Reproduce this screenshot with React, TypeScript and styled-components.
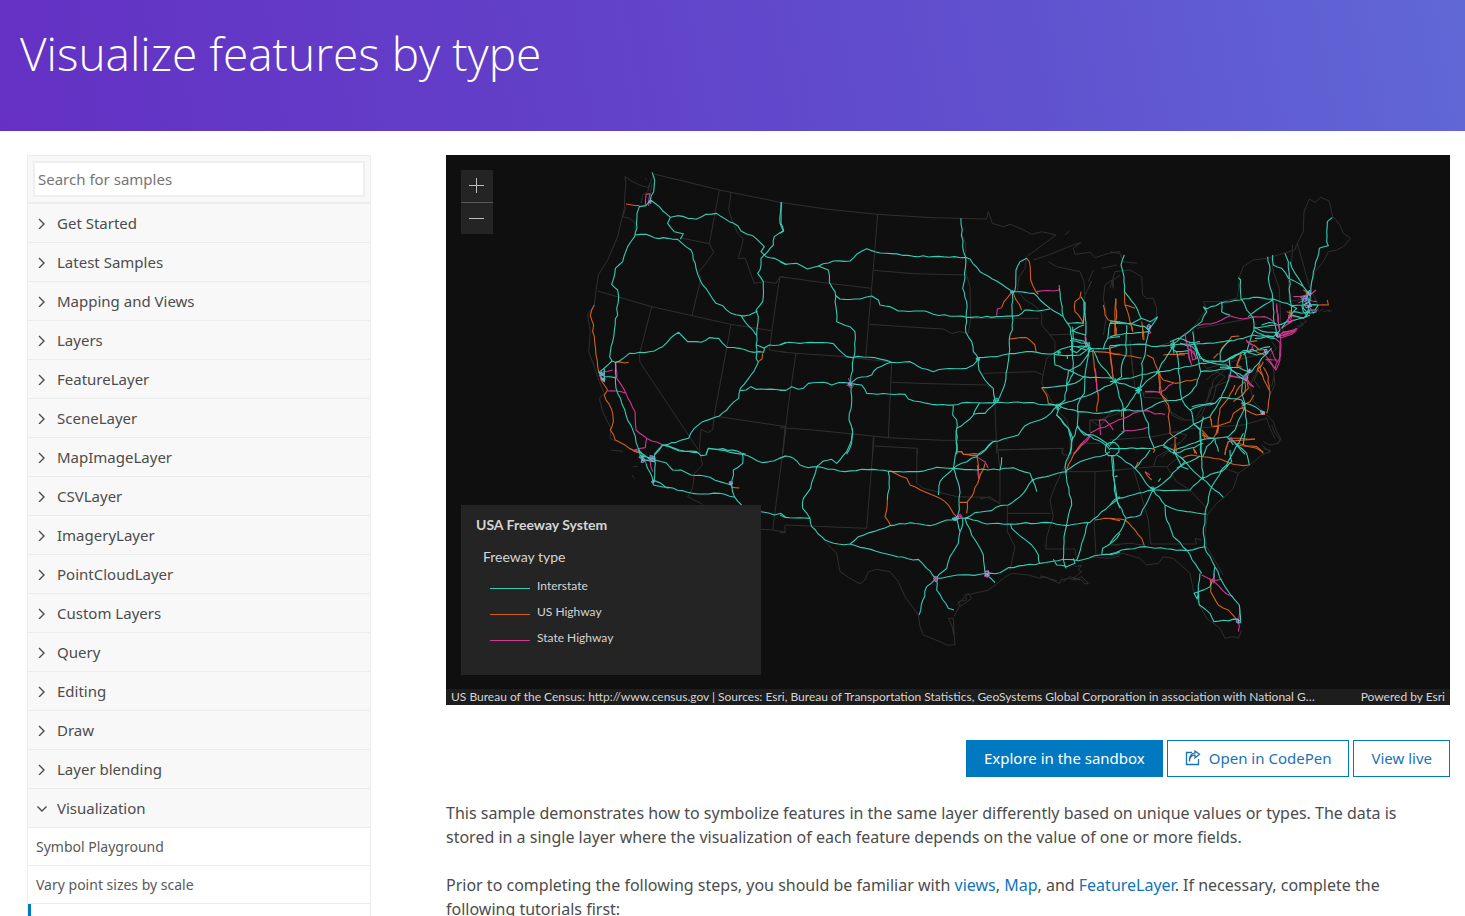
import React from "react";
import styled, { createGlobalStyle, css } from "styled-components";

const sans = `"Noto Sans", "Open Sans", sans-serif`;
const displayFont = `"Open Sans", "Noto Sans", sans-serif`;
const mapFont = `Lato, "Open Sans", sans-serif`;

const GlobalStyle = createGlobalStyle`
  *, *::before, *::after { box-sizing: border-box; }
  body { margin: 0; background: #fff; color: #4c4c4c; font-family: ${sans}; }
  button, input { font: inherit; }
`;

const Page = styled.div`
  height: 100vh;
  overflow: hidden;
`;

const Banner = styled.header`
  height: 131px;
  padding: 20px;
  color: #fff;
  background: linear-gradient(80deg, #6431c4 0%, #6240c8 38%, #6052cf 70%, #6068d6 100%);
`;

const Title = styled.h1`
  margin: 0;
  font-family: ${displayFont};
  font-size: 46px;
  line-height: 66px;
  font-weight: 300;
`;

const Columns = styled.div`
  display: grid;
  grid-template-columns: 344px minmax(0, 1fr);
  column-gap: 75px;
  padding: 24px 15px 0 27px;
  align-items: start;
`;

const Sidebar = styled.nav`
  border: 1px solid #ececec;
  background: #f8f8f8;
`;

const SearchBox = styled.div`
  padding: 5px;
  border-bottom: 2px solid #ececec;
`;

const SearchInput = styled.input`
  display: block;
  width: 100%;
  height: 36px;
  padding: 0 3px;
  border: 2px solid #efefef;
  background: #fff;
  color: #4c4c4c;
  font-size: 15px;
  &::placeholder { color: #757575; opacity: 1; }
`;

const List = styled.ul`
  list-style: none;
  margin: 0;
  padding: 0;
`;

const Category = styled.button`
  display: flex;
  align-items: center;
  gap: 10px;
  width: 100%;
  height: 39px;
  padding: 0 9px;
  border: 0;
  border-bottom: 1px solid #ececec;
  background: transparent;
  color: #4c4c4c;
  font-size: 15px;
  text-align: left;
`;

const Sample = styled.a<{ $active?: boolean }>`
  display: flex;
  align-items: center;
  height: 38px;
  padding: 0 8px;
  border-bottom: 1px solid #ececec;
  background: #fff;
  color: #595959;
  font-size: 14px;
  text-decoration: none;
  ${(p) => p.$active && css`
    border-left: 3px solid #0079c1;
    padding-left: 5px;
  `}
`;

const MapView = styled.section`
  position: relative;
  background: #0f0f0f;
  color: #d4d4d4;
  font-family: ${mapFont};
  overflow: hidden;
`;

const MapDrawing = styled.svg`
  display: block;
  width: 100%;
  height: auto;
  fill: none;
  stroke-linejoin: round;
  path { vector-effect: non-scaling-stroke; }
`;

const ZoomControl = styled.div`
  position: absolute;
  top: 15px;
  left: 15px;
  display: grid;
  width: 32px;
  row-gap: 1px;
  background: #5a5a5a;
`;

const ZoomButton = styled.button`
  display: grid;
  place-items: center;
  height: 32px;
  padding: 0;
  border: 0;
  background: #242424;
  color: #bdbdbd;
  & + & { height: 31px; }
`;

const Legend = styled.div`
  position: absolute;
  left: 15px;
  bottom: 30px;
  width: 300px;
  height: 170px;
  padding: 10px 15px;
  background: #242424;
`;

const LegendTitle = styled.h2`
  margin: 0;
  font-size: 14px;
  line-height: 20px;
  font-weight: 700;
`;

const LegendCaption = styled.h3`
  margin: 12px 0 5px 7px;
  font-size: 14px;
  line-height: 20px;
  font-weight: 400;
`;

const LegendRow = styled.li`
  display: flex;
  align-items: center;
  gap: 7px;
  height: 26px;
  margin-left: 14px;
  font-size: 12px;
`;

const Swatch = styled.span<{ $color: string }>`
  width: 40px;
  height: 1px;
  margin-top: 7px;
  background: ${(p) => p.$color};
`;

const Attribution = styled.div`
  position: absolute;
  left: 0;
  right: 0;
  bottom: 0;
  display: flex;
  justify-content: space-between;
  gap: 40px;
  height: 16px;
  padding: 0 5px;
  background: #1d1d1d;
  font-size: 12px;
  line-height: 16px;
  white-space: nowrap;
`;

const Sources = styled.span`
  min-width: 0;
  overflow: hidden;
  text-overflow: ellipsis;
`;

const Actions = styled.div`
  display: flex;
  justify-content: flex-end;
  gap: 4px;
  margin: 35px 0 24px;
`;

const Action = styled.button<{ $primary?: boolean }>`
  display: flex;
  align-items: center;
  gap: 8px;
  height: 37px;
  padding: 0 17px 2px;
  border: 1px solid #0079c1;
  background: ${(p) => (p.$primary ? "#0079c1" : "#fff")};
  color: ${(p) => (p.$primary ? "#fff" : "#1a73b5")};
  font-size: 15px;
  white-space: nowrap;
`;

const Paragraph = styled.p`
  margin: 0 0 24px;
  padding-right: 16px;
  font-size: 16px;
  line-height: 24px;
`;

const TextLink = styled.a`
  color: #0f74ba;
  text-decoration: none;
`;

const TEAL = "#35cdb5";
const ORANGE = "#d2601f";
const PINK = "#cf3790";
const BORDER = "#2f2f2f";
const HUB = "#8aa9d8";

type Sheet = {
  x: number;
  y: number;
  borders: string[];
  interstates: string[];
  usHighways: string[];
  stateHighways: string[];
};

// The country is stored as sheets drawn at three times the view scale.
const sheets: Sheet[] = [
  {
    x: 0,
    y: 0,
    borders: [
      "M622 57L720 80 820 105 920 125 1002 142",
      "M622 57L615 80 605 98 580 90 557 78 537 65 540 85 537 110 535 160 528 190 515 245 485 315 457 360 450 408 445 450 425 480 433 530 428 590 445 635 460 680 475 715 460 730 470 770 495 820 492 850 508 858",
      "M540 155L530 185 550 190 567 203 568 235",
      "M612 85L605 110 590 120 585 145M618 85L610 125 617 140M598 70L603 76",
      "M700 248L790 266M820 105L805 185 790 266 803 292 780 325 757 352 765 370 738 482",
      "M455 408L617 455 738 482 855 508 975 527",
      "M855 112L848 165 858 195 875 235 892 252 885 280 877 310 898 310 912 350 925 385 955 380 990 385 1002 365 1020 368",
      "M617 455L580 600 582 622 757 885",
      "M855 508L842 580 805 780 800 825 785 833 765 822 760 885M1002 365L990 440 970 585 1020 592M805 783L1020 815",
    ],
    interstates: [
      "M618 52L626 75 623 110 613 135 600 152 580 155 573 175 573 220 566 245 545 275 530 320 508 340 503 370 497 388 515 405 518 425 512 460 515 480 508 492 500 560 491 605 498 618 508 622 510 665 508 667 510 700 540 780 568 845 577 880 585 895",
      "M613 135L640 155 673 187 695 182 725 190 750 193 780 178 812 175 850 200 875 212 885 228 920 242 945 265 955 275 945 290 960 305 985 310 1020 328",
      "M673 187L665 205 685 230 712 236 703 253",
      "M566 240L600 238 625 248 665 250 695 253 735 285 750 340 770 390 810 445 830 452 855 475 885 482 910 480 935 468M885 482L910 515 930 540",
      "M1005 142L1003 175 1002 205 1012 228 985 245 982 270 965 290 955 300 945 310 942 345 935 355 952 380 950 440 930 465 937 485 932 540 932 600 930 610 937 622 915 660 883 700 878 730 850 755 820 783 770 800 745 820 728 850 690 862 650 870 625 898",
      "M508 622L520 618 550 595 580 592 625 588 650 575 675 548 698 532 725 560 765 562 790 548 818 550 843 577 880 580 925 592 953 592 955 580 932 570M953 580L970 570 1000 570 1020 562",
      "M883 707L900 705 915 695 930 703 1020 706",
      "M498 618L472 642 458 652 475 665 508 668M475 642L475 680 462 660",
      "M650 870L700 885 757 893M780 898L787 880 860 885 900 898",
    ],
    usHighways: [
      "M445 450L433 482 443 510 440 530 445 545 450 600 458 650 465 675 475 690 485 705 475 720 500 775 502 800 493 825 508 855 550 880 580 893",
      "M508 622L548 622M950 595L948 612 937 620M540 147L580 152",
    ],
    stateHighways: [
      "M598 150L600 118 612 116 608 152",
      "M510 622L512 670 540 715 567 770 570 825 602 850 598 878 565 885M602 850L650 870M485 708L512 708 540 715M470 650L500 645M460 660L475 680",
    ],
  },
  {
    x: 334,
    y: 0,
    borders: [
      "M0 142L145 163 293 178 455 188 620 192 625 170 637 205 670 215 690 208 725 222 755 238 785 230 828 240 740 305",
      "M293 178L275 400 265 508 257 612 200 605",
      "M281 346L400 356 557 360M0 365L145 385 275 400M268 508L450 520 490 522 515 535 540 530 560 535",
      "M545 235L557 265 557 350 570 395 572 490 565 535",
      "M572 490L778 490M0 590L48 595 200 605 335 622M335 622L325 848M48 595L25 750 8 898M0 818L100 825 325 848 400 852 490 856 650 856M280 845L278 895M282 873L412 880 412 898",
      "M335 682L450 686 620 690 640 705 645 740 650 895M610 655L765 650 790 660",
      "M740 305L735 340 718 365 712 405 735 435 762 450 785 475 785 510 810 540 825 560 825 590 800 610 790 655 785 685 810 730 835 770 860 795 870 830 870 890",
      "M810 540L910 536M855 240L868 228M760 315L805 300 880 270 902 263 880 280 885 298 930 292 945 308 985 295 1020 290",
      "M805 320L830 335 900 350 912 380 915 420 935 378 925 400M915 420L912 450 918 540M940 345L925 380M965 340L1010 330M1020 360L1000 375 1000 400 995 375 975 390 970 430 980 480 970 540",
      "M655 885L850 880 845 898M930 830L930 795 965 795 1015 760",
    ],
    interstates: [
      "M5 142L3 175 3 205 11 228 0 235M0 320L15 328 50 325 82 342 115 333 145 345 148 382 165 410 170 500 210 515 225 530 225 585 220 610 212 680 215 740 207 795 218 830 215 865 200 898",
      "M115 333L160 318 210 318 230 298 260 281 285 290 400 304 475 304 557 307 570 312 600 350 650 378 695 408 735 412 762 415 780 435 810 460 850 485 872 520 875 560 880 655 860 690",
      "M543 190L548 275 557 307 555 370 548 400 560 440 557 530 575 560 580 590 595 610 597 645 615 675 640 700 645 735",
      "M165 420L180 432 240 432 275 423 295 435 300 450 330 455 355 468 435 468 460 478 560 487 650 485 715 482 735 465 775 468 810 462",
      "M740 310L720 320 708 345 705 405 697 420 697 525 688 550 687 600 682 640 670 700 650 740",
      "M0 570L25 562 60 565 90 562 160 566 200 605 285 608 335 622 390 620 425 640 460 650 490 642 560 640 580 630 595 608 650 605 687 596 740 590 820 597 860 602 900 600 930 575",
      "M0 706L20 705 35 695 55 703 70 700 85 685 130 682 155 690 175 683 212 685 245 690 260 715 375 718 385 732 455 748 520 750 560 742 650 742 745 743 835 752 895 770 955 775 1020 765",
      "M212 685L230 670 275 660 290 640 335 622",
      "M520 750L518 780 530 795 530 898M530 820L545 812 580 780 600 742M580 778L615 775 645 745",
      "M835 750L800 785 735 812 715 840 640 860 600 898",
      "M838 400L843 440 850 485M860 505L910 505 912 440 903 425M915 440L918 560 930 580M875 530L890 520 912 510M875 550L910 558 925 570M820 597L845 582 875 573 920 575M823 600L825 630 865 645 910 665 930 668 1000 670M785 698L855 692 885 685 912 665M835 750L855 735 860 690 865 648 900 630 930 585M930 580L915 660 913 715 893 750 892 810 912 840 940 840 970 858 990 875M835 755L830 780 865 820 878 850 870 898M835 752L905 727 960 705 1005 680M930 580L970 582 983 550 1020 545M940 585L955 620 1000 675M970 582L1020 570M983 550L990 505 1020 500M893 810L885 840 875 855M862 600L862 612",
    ],
    usHighways: [
      "M740 310L748 320 752 375 768 410 775 418M695 412L672 440 665 458M700 415L725 465M688 552L740 548 765 570 768 590M838 390L838 405M903 410L900 428 885 440 885 470 910 503M970 450L975 480 985 495 1005 500M1007 430L1010 470 1005 540M785 698L800 720 805 745 835 755M938 585L945 650 955 720 950 770M945 590L1020 598M988 572L1000 670M530 890L545 890 550 898 600 898M880 895L905 870",
    ],
    stateHighways: [
      "M770 410L838 405M665 458L652 462 650 482M915 545L918 580M945 640L950 700 955 720M905 870L930 845M205 670L212 685 200 692",
    ],
  },
  {
    x: 664,
    y: 0,
    borders: [
      "M388 365L400 335 430 315 470 310 555 285 560 268 580 230 582 170 598 132 615 142 632 127 658 138 668 185 690 210 700 235 722 250 700 275 680 285 655 290 640 320 615 350 600 400",
      "M485 308L490 350 508 400 512 500 520 525M548 270L545 320 535 350 538 440M562 265L600 400M535 440L595 430",
      "M388 365L385 410 380 430 335 440 280 440 290 460 250 518 190 560 140 575 100 568",
      "M0 290L30 295 40 320 80 325M0 400L15 350 60 345 95 365 98 420 110 430 130 430 140 460 140 490 115 510",
      "M250 518L255 575M260 520L425 490 440 510M255 595L290 640 440 600M60 575L75 700",
      "M98 715L150 710 170 725 185 780 215 795 255 795 275 780 290 745 300 700 350 680M290 640L320 650 345 665 320 690 310 730 300 745M0 855L130 845 250 820 400 810 470 790",
      "M485 560L500 580 480 600 490 640 495 690 480 720M440 650L420 690 430 740 460 770M470 780L490 800 500 830 512 850 505 865 480 870 460 860M470 790L480 820 495 850M455 870L480 890M545 530L580 510 570 500M600 400L620 440 625 465 600 470M640 470L660 465M190 830L230 840 215 860 190 870",
    ],
    interstates: [
      "M667 187L652 200 650 260 655 272 628 280 622 310 615 335 605 380 600 430 595 460",
      "M473 305L480 345 475 370 488 430 490 460 492 500 500 545M488 300L490 330 515 340 535 370 580 395 598 415M525 295L535 320 538 370 540 420 545 465 545 480 515 520M540 320L555 355 580 395",
      "M385 368L392 375 393 430 410 465 430 490 432 525 410 590 400 600",
      "M280 455L290 462 330 445 390 435 430 427 490 432 545 452 580 450 600 440M490 432L440 465 415 485M280 455L290 470 275 500 250 518 215 545 185 570 140 575 105 568 50 570 0 572M335 440L335 470 360 480",
      "M185 570L250 568 340 560 400 550 430 540 490 545M430 520L500 510 540 500 600 480M430 525L470 545 495 550M545 480L580 490 600 465M575 450L580 470 590 480M600 450L625 450 615 465 595 465",
      "M43 300L33 330 42 365 43 410 75 450 93 490 120 500 143 485M143 485L120 520 108 565 105 600 95 625 97 670 88 705M0 498L20 500 60 508 95 490M0 545L50 535 115 530M50 510L48 600 35 630 35 665 15 680",
      "M0 680L15 678 88 705 97 765 115 805 120 850 133 880M15 678L145 650 210 640 270 625 345 618 375 600 410 590 450 582 480 575M15 678L40 760 42 830 20 850 0 870",
      "M145 650L155 625 180 590 190 570M145 650L100 690 85 705 60 740 42 765 0 768M42 765L100 768 150 742 215 732 225 750 245 770 250 805 270 825 273 898M210 735L245 710 260 690 272 650 260 600 248 530M200 590L210 680 215 732",
      "M255 570L270 610 310 625 350 630 365 645 400 665 425 650 455 610 485 580M330 620L330 595 345 570 365 555M272 650L360 640M365 640L350 690 325 745 300 785 250 808 190 845 160 870 130 880 0 880M240 765L265 755 315 745 330 728 395 735 405 755",
      "M400 665L395 710 405 755 410 800 400 870M405 755L375 825 355 845 285 852 195 885 190 898M405 745L435 755 465 775M315 850L325 890M360 850L405 898M160 870L190 885 200 898M350 845L370 870",
      "M395 595L340 620M410 590L440 600 470 590",
    ],
    usHighways: [
      "M0 575L0 595 95 610M18 432L15 490 18 540M43 410L45 450 75 460M45 450L60 500 68 530M95 500L102 555M110 600L130 610 145 650 155 720 175 750 180 835 200 850M145 650L160 675 195 685 260 672M160 600L225 600M310 610L325 595M330 590L345 570 365 545 388 543M395 600L380 640M0 595L10 670M375 690L355 730 330 760 325 820 310 850M405 680L405 710 370 740M405 755L370 775 360 800 310 815M395 755L420 740 432 720M460 620L450 640 470 690 480 710 470 775M455 630L440 650M395 760L440 780 465 778M275 840L310 850M355 850L435 852M380 870L440 880 460 895M355 860L345 898M300 785L305 810M530 470L545 475M625 450L655 450 652 435M430 585L465 600M580 405L600 415M250 880L260 898M195 870L195 898",
    ],
    stateHighways: [
      "M265 512L320 502 360 482 400 492 430 485 465 485 490 500M500 450L505 500 510 530M550 425L600 420 618 405M535 480L545 500 515 520M505 545L520 530 545 530 560 520M510 550L545 538 560 525M512 540L512 600 495 640 465 600M480 580L500 620M105 710L150 712 190 685M415 595L430 570 410 560M355 660L400 668 430 695M540 480L580 490M580 430L620 440",
    ],
  },
  {
    x: 334,
    y: 245,
    borders: [
      "M15 84L8 162M411 150L410 250 430 265 470 275 530 290 620 292 662 310M282 110L260 385 15 375 15 398 0 398M650 120L660 210 660 305M655 150L845 145 850 165 875 165M682 315L682 395 705 440 690 510M682 340L812 340M845 215L945 215 1020 210M945 215L943 380 948 465M845 215L825 260 810 300 820 350 800 410 797 447 885 447 890 480M870 95L875 160 855 200 845 215M930 95L930 60 960 60 1020 38M985 435L1020 435M960 130L920 130 900 140",
      "M135 425L155 445 170 460 180 515 205 532 240 552 255 540 265 515 290 508 330 515 355 545 375 590 415 645 420 680 430 705 480 725 500 735 525 735 522 695 520 655 505 655 515 675 522 705M522 650L540 615 535 605 560 600 555 585 575 582 625 570 650 552 670 535 695 520 745 525 780 535 795 530 815 540 840 550 842 540 865 535 885 540 905 530 925 550 915 552 905 540 880 535 905 515 895 510 905 495 885 500",
      "M530 615L565 580 575 595 540 620M780 528L800 533 830 542M850 545L870 530 900 540",
      "M930 470L990 475 1020 468M600 297L630 290 660 312",
    ],
    interstates: [
      "M530 84L530 150 520 205 538 260 538 330M0 175L15 168 40 175 60 195 85 203 110 200 195 215 245 208 280 208 340 215 415 215 470 202 520 205 590 210 640 207 660 210 665 172M660 208L700 203 750 220 758 240 855 215 900 185 975 165 990 155",
      "M217 85L215 120 200 155 180 180 170 190 155 178 130 183 110 200 92 265 70 295 68 325 90 355 95 380 135 420 175 432 210 432 235 410 330 377 390 368 450 377 500 360 530 357 565 355 620 372 690 372 800 367 860 377 930 367 1010 300 1020 290",
      "M0 345L15 352 90 355M210 432L240 442 320 462 400 480 415 478 440 505 468 535 515 528 600 523 660 518 685 503 780 490 850 478 895 482 960 465 1010 460 1020 455",
      "M325 215L328 265 322 300M520 205L480 245 475 285M590 170L545 190 520 205M638 125L590 170M538 330L530 355 540 395 535 430 510 470 500 505 468 535 440 560 417 645M470 535L470 570 505 625 522 630M548 355L545 385 540 395M555 355L575 405 610 465 615 520 645 548",
      "M555 355L585 338 635 332 660 317 685 315 720 290 757 240 770 275M692 372L695 385 755 435 775 465 778 490M820 478L830 495 860 500 885 490 880 475M925 367L905 430 890 482M857 215L875 315 860 375 852 410 850 478 858 505M892 80L915 100 970 130 990 150M870 100L875 140 855 200 857 215M998 165L1003 270 1010 300M1003 230L1012 228M965 465L968 445 1010 415 1020 400M1010 300L1020 325M830 45L865 85 875 120",
    ],
    usHighways: [
      "M322 300L320 330 315 350 332 377M330 212L380 235 390 255 470 290 495 305 530 350M530 155L545 155 550 163 590 167 597 238 575 290 562 305 560 340M597 238L615 190M540 307L562 307M860 210L880 165 905 130M945 360L975 355 1020 362",
    ],
    stateHighways: ["M590 170L615 185 625 205M592 195L597 238M905 130L930 105 880 165"],
  },
  {
    x: 664,
    y: 245,
    borders: [
      "M0 212L130 200 170 200 215 165M170 200L200 245 240 270 290 325M70 205L105 325 115 360 122 432 260 432 255 415 275 420M130 200L140 170 175 150 190 130M330 200L385 220 370 265 345 290 320 310 292 345 285 400 290 440 340 525",
      "M480 155L455 165 420 195 385 220M0 435L60 430 100 435M0 468L40 460 90 475 110 495 145 490 160 470 190 475 240 520 250 570 260 600 290 655 330 685 345 715 370 710 385 715 395 690M460 145L482 152 475 160M485 75L495 100 512 120 500 130",
    ],
    interstates: [
      "M5 165L20 300 48 355 92 345 107 315 130 268 170 240 210 200 270 168M25 295L130 270 240 270 275 235 330 215 350 195 400 100M20 165L75 205 108 250 130 268M75 205L107 170 120 150M48 355L30 395 0 430M130 270L165 315 200 330 290 342M165 315L170 360 190 410 230 450 275 520",
      "M0 462L35 450 105 440 230 452 283 440 280 400 285 340 305 260 335 210M0 315L25 290M190 155L230 190 275 235 340 292M280 50L270 100 275 170 278 235M283 440L315 500 345 560 388 615 392 670M315 500L312 530 300 560 265 575 252 580 262 597 265 575M270 520L265 575 268 615 300 640 312 665 385 658M360 115L410 160 418 195M15 230L22 228M145 245L152 235M195 160L240 145 280 130M160 140L195 160 215 200 235 208M360 150L365 185 335 215",
      "M278 170L290 140 315 115M250 72L272 90",
    ],
    usHighways: [
      "M0 355L45 360 75 390 95 415 103 437M105 215L125 240M215 175L245 165 330 177 360 190 400 197 418 195M345 165L355 125 400 120 435 117M380 130L440 140 460 157M250 145L260 160M275 98L290 112M300 535L302 575 325 615 355 630 380 658M195 115L200 155M75 205L85 185M325 80L318 105",
    ],
    stateHighways: ["M275 525L305 540 335 538M305 540L350 582 370 590M312 520L310 550M105 215L120 225M388 615L385 695M380 655L390 670M282 435L288 445"],
  },
  {
    x: 0,
    y: 245,
    borders: [
      "M760 150L770 195 745 220 740 265 725 290 770 313M1020 81L980 390 945 388M980 390L1020 397M495 150L530 154M562 200L575 200M558 225L565 235",
    ],
    interstates: [
      "M650 135L700 153 752 155 765 167 780 165 787 145 870 160 890 163 950 188 985 182 1020 168M890 163L890 190 862 210 857 255 865 290 887 315M625 165L628 180 660 188 680 210 705 210 735 225 775 228 857 255M625 165L650 135M577 150L585 170 625 175 628 190 625 240M600 190L618 230 622 255 665 262 740 280 820 280 867 292",
      "M945 335L955 337 985 345 1005 340 1020 352M620 240L645 250 665 265M580 155L625 185 585 180",
    ],
    usHighways: ["M857 262L880 264M550 145L577 158"],
    stateHighways: ["M562 150L585 155 600 190M590 180L630 182M850 250L860 262M610 170L620 215"],
  },
  {
    x: 734,
    y: 125,
    borders: [
      "M415 95L430 88M445 95L455 92M250 140L285 145M350 140L380 125 372 118M235 275L222 300 240 325M80 300L95 285 115 275 150 240M282 290L275 320",
    ],
    interstates: [
      "M0 190L35 198 55 222 72 244 100 243 130 246 162 230 190 212 222 208M40 190L60 225M192 215L200 250 205 275M205 275L175 262 150 262 148 240M150 262L120 262M222 140L250 155 290 158M225 175L280 170 300 150M245 135L265 128 290 132M365 50L370 85 390 100 410 95M380 40L390 75 380 105M335 78L350 85 330 110M340 95L365 100 390 95M190 290L215 270M150 268L190 298",
    ],
    usHighways: [
      "M183 222L170 255 185 262M222 195L238 210 260 208M240 248L232 268 250 290M250 262L265 290 268 330M195 305L178 320 165 345M205 300L205 325 188 345M330 90L335 115M375 35L390 45M212 185L232 182",
    ],
    stateHighways: [
      "M290 70L293 120 300 150M330 95L325 130 342 118M302 162L352 146M302 167L346 152M308 168L335 158M305 160L340 150M285 175L300 188 300 240 288 270 258 238 292 240M18 180L25 220 35 255M28 185L38 240 50 235 30 210M145 290L190 295 222 322M360 52L395 42M355 68L385 62M385 75L400 100 412 88M200 300L210 265M198 180L215 195",
    ],
  },
  {
    x: 624,
    y: 165,
    borders: [
      "M218 215L222 232 275 235 300 275 345 300M380 290L420 225 430 180 465 150M180 60L190 170M60 300L90 320 120 280M275 410L330 370",
    ],
    interstates: [
      "M5 30L48 45M0 62L50 70M0 88L20 98 50 78M8 20L8 100M20 80L48 90M300 65L325 55 365 68 390 65M300 80L318 95 355 92M310 62L312 100M120 8L180 10 225 20 240 35M195 212L215 208M205 200L205 222",
      "M365 260L385 255 435 250M108 375L118 368 135 368 147 380 147 395 135 407 115 407 106 395ZM320 445L345 425 330 410",
    ],
    usHighways: [
      "M135 10L138 45M180 8L188 35M218 15L220 60M270 160L270 220 290 240M400 340L405 360M420 290L425 318 445 320 443 340M395 330L415 352M370 385L375 400M320 110L330 100 355 100M155 268L155 290M245 385L255 390 250 398",
    ],
    stateHighways: [
      "M345 40L352 75 362 125M352 85L372 95 378 118M88 300L105 300 130 330M88 300L92 345M60 340L205 275 235 272 255 282 285 283M155 335L200 330 235 322M45 45L48 70M230 20L242 38 232 45",
    ],
  },
];

// Dense city interchanges, in view coordinates with a radius.
const hubs: [number, number, number, string][] = [
  [156, 219, 3, HUB], [157, 224, 2, HUB], [195, 302, 3, TEAL], [197, 305, 3, HUB], [206, 303, 3, HUB], [204, 47, 2, HUB],
  [404, 229, 2, HUB], [566, 137, 2, HUB], [550, 246, 3, TEAL], [613, 198, 2, TEAL], [532, 204, 2, TEAL],
  [612, 252, 3, TEAL], [641, 190, 3, TEAL], [644, 195, 3, TEAL], [669, 226, 3, TEAL],
  [693, 235, 3, TEAL], [678, 255, 2, TEAL], [703, 172, 3, HUB], [727, 190, 3, TEAL], [712, 217, 2, TEAL],
  [514, 362, 3, PINK], [511, 363, 3, HUB], [490, 424, 3, HUB], [508, 364, 2, TEAL], [541, 419, 4, PINK],
  [541, 419, 3, HUB], [707, 334, 3, TEAL], [757, 323, 1, TEAL], [799, 223, 3, HUB], [803, 216, 2, HUB],
  [832, 180, 3, HUB], [820, 197, 3, HUB], [862, 150, 4, HUB], [863, 138, 3, HUB], [816, 257, 2, HUB],
  [797, 249, 2, PINK], [798, 249, 2, TEAL], [817, 258, 2, HUB], [767, 425, 2, PINK], [785, 284, 2, PINK],
  [207, 327, 2, HUB], [285, 328, 2, HUB], [620, 317, 1, TEAL], [587, 325, 1, TEAL], [859, 144, 3, HUB],
  [490, 424, 2, PINK], [792, 466, 2, HUB], [405, 230, 3, PINK], [405, 229, 2, TEAL], [799, 222, 2, PINK],
];

const noise = (x: number, y: number) => {
  const n = Math.sin(x * 12.9898 + y * 78.233) * 43758.5453;
  return (n - Math.floor(n)) * 2 - 1;
};

// Breaks the long straight stretches of a road into short, slightly uneven bends.
const winding = (d: string) =>
  d
    .split("M")
    .filter(Boolean)
    .map((line) => {
      const closed = line.includes("Z");
      const n = (line.match(/\d+/g) || []).map(Number);
      let out = `M${n[0]} ${n[1]}`;
      for (let i = 2; i + 1 < n.length; i += 2) {
        const [ax, ay, bx, by] = [n[i - 2], n[i - 1], n[i], n[i + 1]];
        const length = Math.hypot(bx - ax, by - ay);
        const steps = Math.max(1, Math.round(length / 16));
        for (let k = 1; k < steps; k++) {
          const t = k / steps;
          const off = noise(ax + k * 7, by + k * 3) * 2.2;
          const x = ax + (bx - ax) * t - ((by - ay) / length) * off;
          const y = ay + (by - ay) * t + ((bx - ax) / length) * off;
          out += `L${x.toFixed(1)} ${y.toFixed(1)}`;
        }
        out += `L${bx} ${by}`;
      }
      return closed ? out + "Z" : out;
    })
    .join("");

// A small tangle of ring road and crossing streets.
const tangle = (x: number, y: number, r: number) => {
  const ring = Array.from({ length: 7 }, (_, i) => {
    const a = (i / 7) * Math.PI * 2 + x;
    const q = r * (0.75 + 0.35 * noise(x + i, y));
    return `${(x + Math.cos(a) * q).toFixed(1)} ${(y + Math.sin(a) * q).toFixed(1)}`;
  });
  return `M${ring.join("L")}ZM${ring[0]}L${ring[3]}M${ring[1]}L${ring[5]}M${ring[2]}L${ring[6]}`;
};

const Lines = ({ paths, color }: { paths: string[]; color: string }) => (
  <path d={paths.join("")} stroke={color} strokeWidth={1} />
);

const Roads = ({ paths, color }: { paths: string[]; color: string }) => (
  <path d={paths.map(winding).join("")} stroke={color} strokeWidth={1.1} />
);

const FreewayMap = () => (
  <MapDrawing viewBox="0 0 1004 550" role="img" aria-label="USA freeway map">
    {sheets.map((s, i) => (
      <g key={i} transform={`translate(${s.x} ${s.y}) scale(0.33333)`}>
        <Lines paths={s.borders} color={BORDER} />
      </g>
    ))}
    {sheets.map((s, i) => (
      <g key={i} transform={`translate(${s.x} ${s.y}) scale(0.33333)`}>
        <Roads paths={s.usHighways} color={ORANGE} />
        <Roads paths={s.stateHighways} color={PINK} />
        <Roads paths={s.interstates} color={TEAL} />
      </g>
    ))}
    {hubs.map(([x, y, r, color], i) => (
      <path key={i} d={tangle(x, y, r)} stroke={color} strokeWidth={0.8} />
    ))}
  </MapDrawing>
);

const Chevron = ({ open }: { open?: boolean }) => (
  <svg width="10" height="12" viewBox="0 0 10 12" fill="none" stroke="#4c4c4c" strokeWidth="1.4" aria-hidden="true">
    <path d={open ? "M0.5 4.5L5 9L9.5 4.5" : "M2 2L7 7L2 12"} />
  </svg>
);

const LaunchIcon = () => (
  <svg width="16" height="16" viewBox="0 0 16 16" fill="none" stroke="#1a73b5" strokeWidth="1.3" aria-hidden="true">
    <path d="M7 2.5H1.5V14.5H13.5V9" />
    <path d="M4.5 11.5C4.5 7 7 5.2 10 5.2V7.8L14.5 4.2L10 1V3.2C6.5 3.2 4 6 4.5 11.5Z" />
  </svg>
);

const categories = [
  "Get Started", "Latest Samples", "Mapping and Views", "Layers", "FeatureLayer", "SceneLayer",
  "MapImageLayer", "CSVLayer", "ImageryLayer", "PointCloudLayer", "Custom Layers", "Query",
  "Editing", "Draw", "Layer blending", "Visualization",
];

const samples = ["Symbol Playground", "Vary point sizes by scale", "Visualize features by type"];

const legend = [
  { label: "Interstate", color: TEAL },
  { label: "US Highway", color: ORANGE },
  { label: "State Highway", color: PINK },
];

export default function App() {
  return (
    <Page>
      <GlobalStyle />
      <Banner>
        <Title>Visualize features by type</Title>
      </Banner>
      <Columns>
        <Sidebar aria-label="Samples">
          <SearchBox>
            <SearchInput type="text" placeholder="Search for samples" aria-label="Search for samples" />
          </SearchBox>
          <List>
            {categories.map((name) => {
              const open = name === "Visualization";
              return (
                <li key={name}>
                  <Category type="button" aria-expanded={open}>
                    <Chevron open={open} />
                    {name}
                  </Category>
                  {open && (
                    <List>
                      {samples.map((sample, i) => (
                        <li key={sample}>
                          <Sample href="#" $active={i === 2}>{sample}</Sample>
                        </li>
                      ))}
                    </List>
                  )}
                </li>
              );
            })}
          </List>
        </Sidebar>
        <main>
          <MapView aria-label="Map">
            <FreewayMap />
            <ZoomControl>
              <ZoomButton type="button" aria-label="Zoom in">
                <svg width="16" height="16" viewBox="0 0 16 16" stroke="currentColor" aria-hidden="true">
                  <path d="M0 7.5H15M7.5 0V15" />
                </svg>
              </ZoomButton>
              <ZoomButton type="button" aria-label="Zoom out">
                <svg width="16" height="16" viewBox="0 0 16 16" stroke="currentColor" aria-hidden="true">
                  <path d="M0 7.5H15" />
                </svg>
              </ZoomButton>
            </ZoomControl>
            <Legend>
              <LegendTitle>USA Freeway System</LegendTitle>
              <LegendCaption>Freeway type</LegendCaption>
              <List>
                {legend.map(({ label, color }) => (
                  <LegendRow key={label}>
                    <Swatch $color={color} />
                    {label}
                  </LegendRow>
                ))}
              </List>
            </Legend>
            <Attribution>
              <Sources>
                US Bureau of the Census: http://www.census.gov | Sources: Esri, Bureau of Transportation Statistics, GeoSystems Global Corporation in association with National Geographic Maps and Melcher Media, Inc.
              </Sources>
              <span>Powered by Esri</span>
            </Attribution>
          </MapView>
          <Actions>
            <Action type="button" $primary>Explore in the sandbox</Action>
            <Action type="button"><LaunchIcon />Open in CodePen</Action>
            <Action type="button">View live</Action>
          </Actions>
          <Paragraph>
            This sample demonstrates how to symbolize features in the same layer differently based on unique values or types. The data is stored in a single layer where the visualization of each feature depends on the value of one or more fields.
          </Paragraph>
          <Paragraph>
            Prior to completing the following steps, you should be familiar with <TextLink href="#">views</TextLink>, <TextLink href="#">Map</TextLink>, and <TextLink href="#">FeatureLayer</TextLink>. If necessary, complete the following tutorials first:
          </Paragraph>
        </main>
      </Columns>
    </Page>
  );
}
